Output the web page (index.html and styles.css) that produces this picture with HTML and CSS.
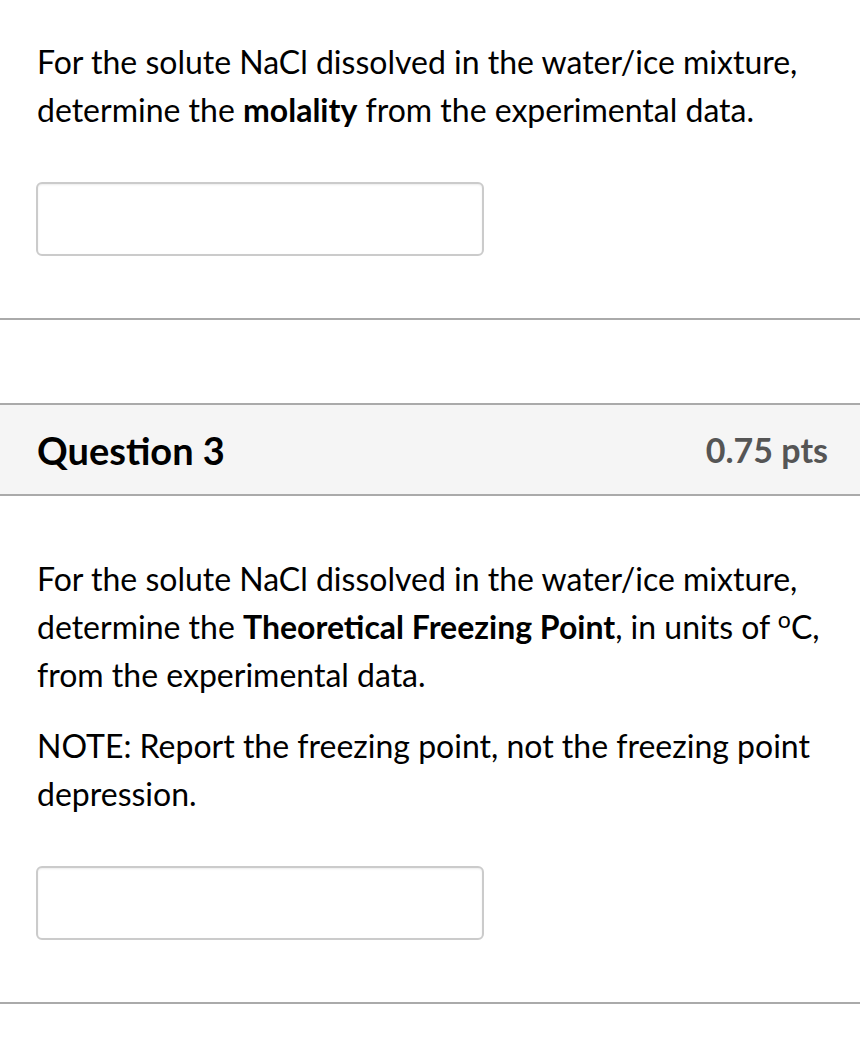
FILE: index.html
```html
<!DOCTYPE html>
<html>
<head>
<meta charset="utf-8">
<link rel="stylesheet" href="styles.css">
</head>
<body>
<div class="question">
  <div class="q-body first">
    <p class="text">For the solute NaCl dissolved in the water/ice mixture, determine the <strong>molality</strong> from the experimental data.</p>
    <div class="answer-box"></div>
  </div>
  <div class="sep"></div>
</div>
<div class="question second">
  <div class="q-header">
    <span class="q-title">Question 3</span>
    <span class="q-pts">0.75 pts</span>
  </div>
  <div class="q-body">
    <p class="text">For the solute NaCl dissolved in the water/ice mixture, determine the <strong>Theoretical Freezing Point</strong>, in units of <sup>o</sup>C, from the experimental data.</p>
    <p class="text note">NOTE: Report the freezing point, not the freezing point depression.</p>
    <div class="answer-box"></div>
  </div>
  <div class="sep"></div>
</div>
</body>
</html>
```

FILE: styles.css
```css
html, body {
  margin: 0;
  padding: 0;
  background: #fff;
}
body {
  font-family: Lato, "Liberation Sans", sans-serif;
  font-size: 32px;
  line-height: 48px;
  color: #000;
  width: 860px;
}
.q-body {
  padding: 0 37px;
}
.q-body.first {
  padding-top: 38px;
}
.text {
  margin: 0;
  max-width: 790px;
}
.text strong {
  font-weight: 700;
}
.text sup {
  font-size: 23px;
  line-height: 0;
  vertical-align: 11px;
}
.note {
  margin-top: 23px;
}
.answer-box {
  margin-top: 48px;
  margin-left: -1px;
  width: 444px;
  height: 70px;
  border: 2px solid #cbcbcb;
  border-radius: 6px;
  box-shadow: inset 0 1px 2px rgba(0,0,0,0.08);
}
.sep {
  margin-top: 62px;
  height: 2px;
  background: #aaaaaa;
}
.second {
  margin-top: 83px;
}
.q-header {
  display: flex;
  justify-content: space-between;
  align-items: center;
  height: 89px;
  padding: 0 32px 0 37px;
  background: #f5f5f5;
  border-top: 2px solid #aaaaaa;
  border-bottom: 2px solid #aaaaaa;
}
.q-title {
  font-weight: 700;
  font-size: 38px;
  color: #000;
}
.q-pts {
  font-weight: 700;
  font-size: 34px;
  color: #555;
}
.second .q-body {
  padding-top: 59px;
}
```
